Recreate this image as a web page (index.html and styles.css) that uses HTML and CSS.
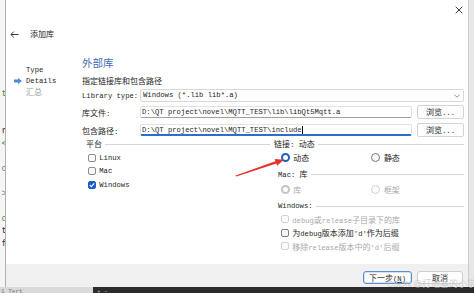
FILE: index.html
```html
<!DOCTYPE html>
<html lang="zh">
<head>
<meta charset="utf-8">
<title>添加库</title>
<link rel="stylesheet" href="styles.css">
</head>
<body>
<div class="desk">
  <div class="edl">
    <div class="ln"></div><div class="ln"></div><div class="ln"></div><div class="ln"></div>
    <div class="ln"></div><div class="ln"></div><div class="ln"></div>
    <div class="ln gr">t</div>
    <div class="ln"></div><div class="ln"></div>
    <div class="ln dk">r</div>
    <div class="ln gr">&lt;</div>
    <div class="ln"></div>
    <div class="ln gy">c</div>
    <div class="ln"></div>
    <div class="ln gy">&gt;</div>
    <div class="ln"></div>
    <div class="ln gr">c</div>
    <div class="ln dk">t</div>
    <div class="ln dk">f</div>
  </div>

  <div class="dialog">
    <div class="main-area">
      <div class="hdr">
        <div class="hrow">
          <svg class="back" width="9" height="7" viewBox="0 0 9 7"><path d="M8.5 3.5H1M3.8 0.6L0.9 3.5L3.8 6.4" fill="none" stroke="#3a3a3a" stroke-width="1"/></svg>
          <span class="title">添加库</span>
        </div>
      </div>
      <svg class="close" width="8" height="8" viewBox="0 0 8 8"><path d="M0.7 0.7L7.3 7.3M7.3 0.7L0.7 7.3" stroke="#3c3c3c" stroke-width="1"/></svg>

      <div class="bd">
        <div class="nav">
          <div class="it ind"><span class="m">Type</span></div>
          <div class="it"><svg width="8" height="6" viewBox="0 0 8 6"><path d="M0 1.6H4V0L8 3L4 6V4.4H0Z" fill="#4f8ad8"/></svg><span class="m">Details</span></div>
          <div class="it ind dim">汇总</div>
        </div>

        <div class="content">
          <div class="h1">外部库</div>
          <div class="desc">指定链接库和包含路径</div>

          <div class="frow r1">
            <span class="lbl m">Library type:</span>
            <div class="combo"><span class="m">Windows (*.lib lib*.a)</span>
              <svg class="chev" width="6" height="4" viewBox="0 0 6 4"><path d="M0.5 0.8L3 3.2L5.5 0.8" fill="none" stroke="#8a8a8a" stroke-width="0.9"/></svg>
            </div>
          </div>

          <div class="frow r2">
            <span class="lbl">库文件<span class="m">:</span></span>
            <div class="inp"><span class="m">D:\QT project\novel\MQTT_TEST\lib\libQt5Mqtt.a</span></div>
            <button class="btn">浏览<span class="m">...</span></button>
          </div>

          <div class="frow r3">
            <span class="lbl">包含路径<span class="m">:</span></span>
            <div class="inp focus"><span class="m">D:\QT project\novel\MQTT_TEST\include</span><span class="caret"></span></div>
            <button class="btn">浏览<span class="m">...</span></button>
          </div>

          <div class="groups">
            <div class="lg">
              <div class="gt"><span>平台</span></div>
              <div class="ck first"><span class="cb"></span><span class="m">Linux</span></div>
              <div class="ck"><span class="cb"></span><span class="m">Mac</span></div>
              <div class="ck"><span class="cb on"><svg width="8" height="8" viewBox="0 0 8 8"><path d="M1.8 4.1L3.3 5.6L6.3 2.4" fill="none" stroke="#fff" stroke-width="1.1"/></svg></span><span class="m">Windows</span></div>
            </div>

            <div class="rg">
              <div class="gt"><span>链接<span class="m">:&nbsp;</span>动态</span></div>
              <div class="rr first">
                <div class="ri"><span class="rb on"></span>动态</div>
                <div class="ri"><span class="rb"></span>静态</div>
              </div>
              <div class="gt sub mac"><span><span class="m">Mac:&nbsp;</span>库</span></div>
              <div class="rr second">
                <div class="ri off"><span class="rb on"></span>库</div>
                <div class="ri off"><span class="rb"></span>框架</div>
              </div>
              <div class="gt sub win"><span class="m">Windows:</span></div>
              <div class="ck w first"><span class="cb"></span><span><span class="m">debug</span>或<span class="m">release</span>子目录下的库</span></div>
              <div class="ck w en"><span class="cb"></span><span>为<span class="m">debug</span>版本添加<span class="m">'d'</span>作为后缀</span></div>
              <div class="ck w"><span class="cb"></span><span>移除<span class="m">release</span>版本中的<span class="m">'d'</span>后缀</span></div>
            </div>
          </div>
        </div>
      </div>
    </div>

    <div class="footer">
      <button class="fbtn def">下一步<span class="m">(<u>N</u>)</span></button>
      <button class="fbtn cancel">取消</button>
    </div>
  </div>

  <div class="dright"></div>

  <div class="bottom">
    <div class="term"><span class="m">1 Tert</span></div>
    <div class="dark"><span class="m">+ &minus;</span></div>
  </div>
</div>

<svg class="redarrow" width="474" height="293" viewBox="0 0 474 293"><polygon points="235.6,175.4 275.4,161.3 274.7,158.9 283.8,159.7 277.1,165.7 276.4,163.5 236.3,176.6" fill="#e3322b"/></svg>

<div class="wm"><span class="m">CSDN @</span>打地基的小学</div>
</body>
</html>
```

FILE: styles.css
```css
* { box-sizing: border-box; margin: 0; padding: 0; }
html, body { width: 474px; height: 293px; overflow: hidden; }
body {
  font-family: "Noto Sans CJK SC", "Noto Sans", sans-serif;
  font-size: 8px;
  color: #1e1e1e;
  background: #ececec;
  position: relative;
}
.m { font-family: "Liberation Mono", "Noto Sans CJK SC", monospace; font-size: 7.2px; }

.desk {
  display: grid;
  grid-template-columns: 5px 463px 6px;
  grid-template-rows: 287px 6px;
  height: 293px;
}

/* background editor strip */
.edl {
  grid-row: 1; grid-column: 1;
  background: #f5f5f5;
  overflow: hidden;
  font-family: "Liberation Mono", monospace;
  font-size: 9px;
  line-height: 12.5px;
  text-align: right;
}
.edl .ln { height: 12.5px; margin-right: -2px; }
.edl .gr { color: #3f8a3a; }
.edl .dk { color: #333; }
.edl .gy { color: #777; }

.dialog {
  grid-row: 1; grid-column: 2;
  background: #fff;
  border-left: 1px solid #b2b2b2;
  display: flex;
  flex-direction: column;
  position: relative;
}
.dright {
  grid-row: 1; grid-column: 3;
  background: #e7e7e7;
  border-left: 1px solid #cdcdcd;
}
.bottom { grid-row: 2; grid-column: 1 / 4; display: flex; }
.bottom .term {
  width: 93px; background: #d9d9d9; color: #777;
  line-height: 6px; overflow: hidden; padding-left: 1px;
}
.bottom .term .m { font-size: 6px; }
.bottom .dark {
  flex: 1; background: #2b2b2b; color: #aaa;
  line-height: 6px; padding-left: 4px; overflow: hidden;
}
.bottom .dark .m { font-size: 6px; }

.main-area { flex: 1; position: relative; }

.hdr { height: 44px; padding: 28px 0 0 4px; }
.hrow { display: flex; align-items: center; height: 12px; gap: 11px; }
.title { font-size: 8px; line-height: 12px; color: #1a1a1a; }
.close { position: absolute; top: 6px; right: 5px; }

.bd {
  display: grid;
  grid-template-columns: 68px 382px;
  padding-left: 8px;
}
.nav { padding-top: 20px; }
.nav .it { display: flex; align-items: center; height: 11.2px; gap: 4px; color: #222; }
.nav .ind { padding-left: 12px; }
.nav .dim { color: #9a9a9a; }

.h1 {
  margin-top: 12px; line-height: 14px; height: 14px;
  font-size: 10.5px; color: #3d6cb4;
}
.desc { margin-top: 5px; line-height: 12px; height: 12px; }

.frow { display: flex; align-items: center; }
.lbl { width: 58px; flex: none; }
.r1 { margin-top: 2px; height: 13px; }
.r2 { margin-top: 3px; height: 14px; }
.r3 { margin-top: 4px; height: 14px; }

.combo {
  flex: 1; height: 13px;
  border: 1px solid #d8d8d8; border-radius: 2px;
  background: #fdfdfd;
  display: flex; align-items: center; justify-content: space-between;
  padding: 0 3px 0 2px;
  line-height: 11px;
}
.chev { margin-top: 1px; }

.inp {
  width: 272px; height: 12px; flex: none;
  border: 1px solid #e2e2e2; border-bottom-color: #a0a0a0;
  border-radius: 2px;
  background: #fff;
  display: flex; align-items: center;
  padding-left: 1px;
  line-height: 10px;
}
.inp.focus { border-bottom: 2px solid #2b6fcb; height: 12px; }
.caret { width: 1px; height: 8px; background: #111; margin-left: 0.5px; }

.btn {
  margin-left: auto;
  width: 47px; height: 14px;
  border: 1px solid #d4d4d4; border-radius: 2px;
  background: #fdfdfd;
  font-family: "Noto Sans CJK SC", sans-serif; font-size: 8px; color: #222;
  line-height: 12px;
}

.groups {
  margin-top: 2px;
  display: grid;
  grid-template-columns: 184px 190px;
  column-gap: 4px;
  padding-left: 4px;
}
.gt {
  display: flex; align-items: center;
  height: 10px; line-height: 10px;
  white-space: nowrap;
}
.gt::after {
  content: ""; flex: 1; height: 1px;
  background: #d6d6d6; margin-left: 3px;
}
.gt.sub { padding-left: 4px; }
.gt.mac { margin-top: 4.5px; }
.gt.win { margin-top: 5.6px; }

.ck { display: flex; align-items: center; height: 13.5px; gap: 3.3px; white-space: nowrap; }
.lg .ck { padding-left: 2px; }
.ck.first { margin-top: 2.2px; }
.rg .ck.first { margin-top: 1px; }
.rg .ck { padding-left: 6.7px; gap: 3.6px; color: #a9a9a9; }
.rg .ck.en { color: #1e1e1e; }

.cb {
  width: 8px; height: 8px; flex: none;
  border: 1px solid #8c8c8c; border-radius: 2px;
  background: #f9f9f9;
  display: flex;
}
.cb.on { background: #1c5fc6; border-color: #1c5fc6; }
.cb.on svg { margin: -1px; }
.rg .ck .cb { border-color: #d3d3d3; background: #fbfbfb; }
.rg .ck.en .cb { border-color: #7e7e7e; background: #f6f6f6; }

.rr { display: flex; height: 13.5px; padding-left: 6.5px; }
.rr.first { margin-top: 2.2px; }
.rr.second { margin-top: 3.2px; }
.ri { width: 90.7px; display: flex; align-items: center; gap: 3.7px; }
.rb {
  width: 9px; height: 9px; flex: none;
  border-radius: 50%;
  border: 1px solid #7a7a7a;
  background: #f6f6f6;
}
.rb.on { border: 2.6px solid #1c5fc4; background: #fff; }
.ri.off { color: #ababab; }
.ri.off .rb { border-color: #d2d2d2; background: #fbfbfb; }
.ri.off .rb.on { border: 2.6px solid #c4c4c4; background: #fff; }

.footer {
  height: 23px; flex: none;
  background: #f0f0f0;
  display: flex; justify-content: flex-end; align-items: flex-start;
  gap: 5px;
  padding: 6.7px 4.7px 0 0;
}
.fbtn {
  height: 13px;
  border: 1px solid #cfcfcf; border-radius: 3px;
  background: #fdfdfd;
  font-family: "Noto Sans CJK SC", sans-serif; font-size: 8px; color: #1e1e1e;
  line-height: 11px;
}
.fbtn.def { width: 48.4px; border-color: #5b8fd0; box-shadow: inset 0 0 0 0.5px #a9c4e8; }
.fbtn.cancel { width: 46.6px; }

.redarrow { position: absolute; left: 0; top: 0; pointer-events: none; }

.wm {
  position: absolute; left: 387px; top: 278px;
  font-size: 9px; line-height: 11px;
  color: rgba(196, 196, 196, 0.8);
  white-space: nowrap;
}
.wm .m { font-family: "Liberation Sans", sans-serif; font-size: 8.5px; }
```
